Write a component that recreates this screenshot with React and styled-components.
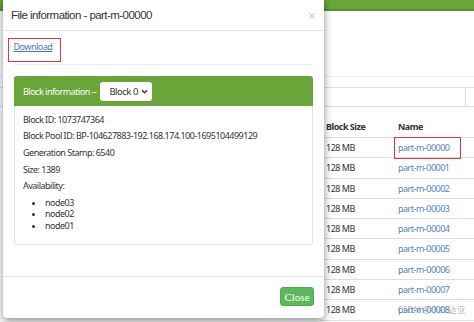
import React from 'react'
import styled, { createGlobalStyle } from 'styled-components'

const blocks = ['part-m-00000', 'part-m-00001', 'part-m-00002', 'part-m-00003', 'part-m-00004', 'part-m-00005', 'part-m-00006', 'part-m-00007', 'part-m-00008']

const App = () => {
  return (
    <Page>
      <GlobalStyle />
      <NavBar />
      <Toolbar />
      <FilterRow>
        <FilterCell />
      </FilterRow>
      <Table>
        <thead>
          <tr>
            <Th $w={60}>Block Size</Th>
            <Th>Name</Th>
          </tr>
        </thead>
        <tbody>
          {blocks.map((name, i) => (
            <tr key={name}>
              <Td>128 MB</Td>
              <Td>
                <NameLink $marked={i === 0}>{name}</NameLink>
              </Td>
            </tr>
          ))}
        </tbody>
      </Table>
      <Watermark>CSDN @小白达亚</Watermark>

      <Modal>
        <ModalHeader>
          <Title>File information - part-m-00000</Title>
          <CloseX>×</CloseX>
        </ModalHeader>
        <ModalBody>
          <DownloadRow>
            <Marked>
              <Link href="#">Download</Link>
            </Marked>
          </DownloadRow>
          <Panel>
            <PanelHeading>
              <span>Block information --</span>
              <Select>
                <span>Block 0</span>
                <svg width="7" height="5" viewBox="0 0 8 6">
                  <path d="M1 1.5 L4 4.5 L7 1.5" stroke="#333" strokeWidth="1.6" fill="none" />
                </svg>
              </Select>
            </PanelHeading>
            <PanelBody>
              <Line>Block ID: 1073747364</Line>
              <Line>Block Pool ID: BP-104627883-192.168.174.100-1695104499129</Line>
              <Line>Generation Stamp: 6540</Line>
              <Line>Size: 1389</Line>
              <Line>Availability:</Line>
              <Nodes>
                <li>node03</li>
                <li>node02</li>
                <li>node01</li>
              </Nodes>
            </PanelBody>
          </Panel>
        </ModalBody>
        <ModalFooter>
          <Button>Close</Button>
        </ModalFooter>
      </Modal>
    </Page>
  )
}

export default App

const GlobalStyle = createGlobalStyle`
  body {
    margin: 0;
    background: #fff;
    overflow: hidden;
  }
`

const Page = styled.div`
  position: relative;
  width: 474px;
  height: 322px;
  overflow: hidden;
  font-family: 'Noto Sans', 'Open Sans', sans-serif;
  font-size: 9px;
  letter-spacing: -0.5px;
  color: #333;
`

const NavBar = styled.div`
  height: 9px;
  background: #6aa539;
  border-bottom: 2px solid #5a9130;
`

const Toolbar = styled.div`
  height: 65px;
  border-bottom: 1px solid #eee;
`

const FilterRow = styled.div`
  margin-top: 10px;
  height: 18px;
  border-top: 1px solid #ddd;
  border-bottom: 1px solid #ddd;
  display: flex;
  justify-content: flex-end;
`

const FilterCell = styled.div`
  width: 8px;
  border-left: 1px solid #ddd;
`

const Table = styled.table`
  margin: 10px 0 0 320px;
  width: 160px;
  border-collapse: collapse;
`

const Th = styled.th`
  width: ${p => (p.$w ? `${p.$w}px` : 'auto')};
  text-align: left;
  font-weight: 700;
  padding: 0 6px;
  height: 20px;
  line-height: 20px;
  border-bottom: 1px solid #ddd;
  color: #333;
`

const Td = styled.td`
  padding: 0 6px;
  height: 19.3px;
  line-height: 19.3px;
  border-bottom: 1px solid #ddd;
  white-space: nowrap;
`

const NameLink = styled.span`
  display: inline-block;
  color: #5283c4;
  position: relative;
  &::after {
    content: '';
    display: ${p => (p.$marked ? 'block' : 'none')};
    position: absolute;
    left: -4px;
    right: -11px;
    top: -1px;
    bottom: -2px;
    border: 1.5px solid #e0353b;
  }
`

const Watermark = styled.div`
  position: absolute;
  right: 8px;
  bottom: 5px;
  font-size: 8.5px;
  letter-spacing: 0;
  color: rgba(110, 110, 110, 0.5);
`

const Modal = styled.div`
  position: absolute;
  left: 3px;
  top: -4px;
  width: 321px;
  height: 322px;
  background: #fff;
  border-radius: 4px;
  box-shadow: 0 3px 9px rgba(0, 0, 0, 0.45);
  display: flex;
  flex-direction: column;
`

const ModalHeader = styled.div`
  height: 35px;
  box-sizing: border-box;
  padding: 4px 9px 0 8px;
  border-bottom: 1px solid #e5e5e5;
  display: flex;
  align-items: center;
  justify-content: space-between;
`

const Title = styled.div`
  font-family: 'Liberation Sans', Arial, sans-serif;
  font-size: 11.5px;
  letter-spacing: -0.55px;
  color: #333;
`

const CloseX = styled.span`
  font-family: 'Liberation Sans', Arial, sans-serif;
  font-size: 13px;
  color: #c8c8c8;
`

const ModalBody = styled.div`
  flex: 1;
  padding: 0 11px;
`

const DownloadRow = styled.div`
  padding-top: 7px;
  height: 34px;
  box-sizing: border-box;
  border-bottom: 1px solid #eee;
`

const Marked = styled.div`
  display: inline-block;
  box-sizing: border-box;
  height: 24px;
  margin-left: -6px;
  padding: 1px 8px 0 4.5px;
  line-height: 14px;
  border: 1.5px solid #e0353b;
`

const Link = styled.a`
  color: #4a78b8;
  text-decoration: underline;
`

const Panel = styled.div`
  margin-top: 11px;
  border: 1px solid #e2e2e2;
  border-radius: 3px;
`

const PanelHeading = styled.div`
  height: 30px;
  margin: -1px -1px 0;
  box-sizing: border-box;
  background: #6aa539;
  border-radius: 3px 3px 0 0;
  color: #fff;
  display: flex;
  align-items: center;
  padding: 0 9px;
  gap: 4px;
`

const Select = styled.div`
  width: 52px;
  height: 19px;
  box-sizing: border-box;
  background: #fff;
  border-radius: 3px;
  color: #333;
  font-size: 9.5px;
  display: flex;
  align-items: center;
  justify-content: space-between;
  padding: 0 4px 0 9px;
`

const PanelBody = styled.div`
  padding: 5.5px 8px 13px 8px;
`

const Line = styled.div`
  height: 16.7px;
  line-height: 16.7px;
`

const Nodes = styled.ul`
  margin: 2px 0 0;
  padding-left: 22px;
  li {
    height: 11.5px;
    line-height: 11.5px;
  }
`

const ModalFooter = styled.div`
  height: 42px;
  border-top: 1px solid #e5e5e5;
  display: flex;
  justify-content: flex-end;
  align-items: flex-start;
  padding: 10px 10px 0 0;
  box-sizing: border-box;
`

const Button = styled.button`
  width: 34px;
  height: 19px;
  padding: 0;
  border: 1px solid #4cae4c;
  border-radius: 3px;
  background: #5cb85c;
  color: #fff;
  font-family: 'Liberation Serif', 'Times New Roman', serif;
  font-size: 11px;
  letter-spacing: 0;
`
